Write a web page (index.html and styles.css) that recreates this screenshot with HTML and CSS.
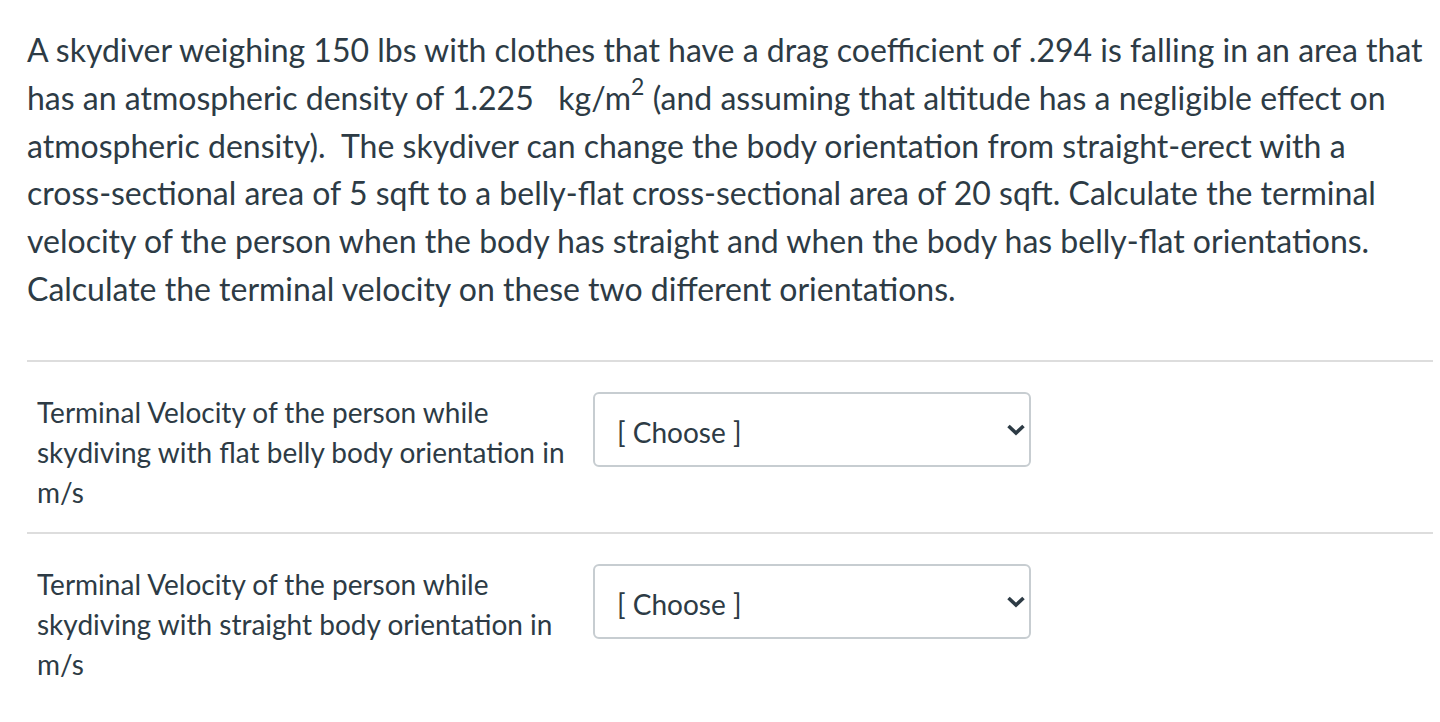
FILE: index.html
```html
<!DOCTYPE html>
<html>
<head>
<meta charset="utf-8">
<link rel="stylesheet" href="styles.css">
</head>
<body>
<div class="question">
  <p class="prompt">A skydiver weighing 150 lbs with clothes that have a drag coefficient of .294 is falling in an area that has an atmospheric density of 1.225 &nbsp; kg/m<sup>2</sup> (and assuming that altitude has a negligible effect on atmospheric density).&nbsp; The skydiver can change the body orientation from straight-erect with a cross-sectional area of 5 sqft to a belly-flat cross-sectional area of 20 sqft. Calculate the terminal velocity of the person when the body has straight and when the body has belly-flat orientations. Calculate the terminal velocity on these two different orientations.</p>
  <div class="answers">
    <div class="row">
      <div class="label">Terminal Velocity of the person while skydiving with flat belly body orientation in m/s</div>
      <div class="select-wrap">
        <select class="select"><option>[ Choose ]</option></select>
        <svg class="chev" width="20" height="14" viewBox="0 0 20 14"><path d="M2.5 3 L10 10 L17.5 3" fill="none" stroke="#2d3b45" stroke-width="3.6" stroke-linecap="butt" stroke-linejoin="miter"/></svg>
      </div>
    </div>
    <div class="row">
      <div class="label">Terminal Velocity of the person while skydiving with straight body orientation in m/s</div>
      <div class="select-wrap">
        <select class="select"><option>[ Choose ]</option></select>
        <svg class="chev" width="20" height="14" viewBox="0 0 20 14"><path d="M2.5 3 L10 10 L17.5 3" fill="none" stroke="#2d3b45" stroke-width="3.6" stroke-linecap="butt" stroke-linejoin="miter"/></svg>
      </div>
    </div>
  </div>
</div>
</body>
</html>
```
FILE: styles.css
```css
html, body {
  margin: 0;
  padding: 0;
  background: #fff;
}
body {
  font-family: Lato, "Liberation Sans", sans-serif;
  color: #2d3b45;
}
.question {
  padding: 0 7px 0 27px;
}
.prompt {
  margin: 26px 0 0 0;
  font-size: 32px;
  line-height: 47.8px;
}
.prompt sup {
  font-size: 23px;
  line-height: 0;
  vertical-align: 15px;
}
.answers {
  margin-top: 47px;
}
.row {
  border-top: 2px solid #dddddd;
  padding: 30px 0 20px 10px;
  display: flex;
  align-items: flex-start;
  gap: 6px;
}
.label {
  width: 550px;
  font-size: 28px;
  line-height: 40px;
}
.select-wrap {
  position: relative;
  width: 438px;
  height: 75px;
}
.select {
  appearance: none;
  -webkit-appearance: none;
  box-sizing: border-box;
  width: 100%;
  height: 100%;
  border: 2px solid #c7cdd1;
  border-radius: 6px;
  background: #fff;
  color: #2d3b45;
  font-family: Lato, "Liberation Sans", sans-serif;
  font-size: 28px;
  padding: 6px 40px 0 22px;
  outline: none;
}
.chev {
  position: absolute;
  right: 5px;
  top: 31px;
  pointer-events: none;
}
```
